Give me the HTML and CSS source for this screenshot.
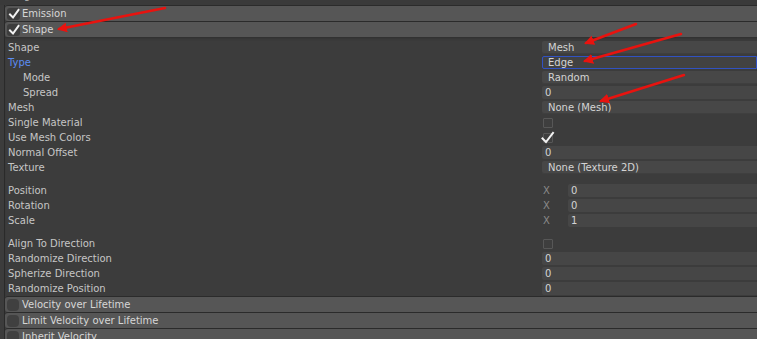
FILE: index.html
```html
<!DOCTYPE html>
<html>
<head>
<meta charset="utf-8">
<link rel="stylesheet" href="styles.css">
</head>
<body>
<div class="inspector">
  <div class="topstrip"><span class="cut">Ring Buffer Mode</span></div>
  <div class="panel">
    <div class="module-header"><span class="toggle"><svg viewBox="0 0 12 12" class="tick"><path d="M2 6.5 L5 9.5 L10.5 2" /></svg></span><span class="mtitle">Emission</span></div>
    <div class="module-header"><span class="toggle"><svg viewBox="0 0 12 12" class="tick"><path d="M2 6.5 L5 9.5 L10.5 2" /></svg></span><span class="mtitle">Shape</span></div>
    <div class="module-body">
      <div class="row"><span class="label">Shape</span><div class="field popup">Mesh</div></div>
      <div class="row"><span class="label focus">Type</span><div class="field popup focused">Edge</div></div>
      <div class="row"><span class="label indent">Mode</span><div class="field popup">Random</div></div>
      <div class="row"><span class="label indent">Spread</span><div class="field num">0</div></div>
      <div class="row"><span class="label">Mesh</span><div class="field popup">None (Mesh)</div></div>
      <div class="row"><span class="label">Single Material</span><div class="cbwrap"><span class="checkbox"></span></div></div>
      <div class="row"><span class="label">Use Mesh Colors</span><div class="cbwrap"><span class="checkbox"><svg viewBox="0 0 14 14" class="cbtick"><path d="M1.5 7.5 L5 11 L12 2" /></svg></span></div></div>
      <div class="row"><span class="label">Normal Offset</span><div class="field num">0</div></div>
      <div class="row"><span class="label">Texture</span><div class="field popup">None (Texture 2D)</div></div>
      <div class="spacer"></div>
      <div class="row"><span class="label">Position</span><div class="vec"><span class="axis">X</span><div class="field num">0</div></div></div>
      <div class="row"><span class="label">Rotation</span><div class="vec"><span class="axis">X</span><div class="field num">0</div></div></div>
      <div class="row"><span class="label">Scale</span><div class="vec"><span class="axis">X</span><div class="field num">1</div></div></div>
      <div class="spacer"></div>
      <div class="row"><span class="label">Align To Direction</span><div class="cbwrap"><span class="checkbox"></span></div></div>
      <div class="row"><span class="label">Randomize Direction</span><div class="field num">0</div></div>
      <div class="row"><span class="label">Spherize Direction</span><div class="field num">0</div></div>
      <div class="row"><span class="label">Randomize Position</span><div class="field num">0</div></div>
    </div>
    <div class="module-header"><span class="toggle off"></span><span class="mtitle">Velocity over Lifetime</span></div>
    <div class="module-header"><span class="toggle off"></span><span class="mtitle">Limit Velocity over Lifetime</span></div>
    <div class="module-header"><span class="toggle off"></span><span class="mtitle">Inherit Velocity</span></div>
  </div>
  <svg class="arrows" width="757" height="339" viewBox="0 0 757 339">
    <defs>
      <marker id="ah" viewBox="0 0 10 10" refX="8" refY="5" markerWidth="4" markerHeight="4" orient="auto-start-reverse">
        <path d="M0 0 L10 5 L0 10 Z" fill="#e8130f"/>
      </marker>
    </defs>
    <line x1="165" y1="8" x2="59" y2="29" marker-end="url(#ah)"/>
    <line x1="636" y1="24" x2="586" y2="43" marker-end="url(#ah)"/>
    <line x1="681" y1="34" x2="585" y2="61" marker-end="url(#ah)"/>
    <line x1="684" y1="75" x2="601" y2="101" marker-end="url(#ah)"/>
  </svg>
</div>
</body>
</html>
```
FILE: styles.css
```css
html, body {
  margin: 0;
  padding: 0;
  background: #3c3c3c;
}
body {
  font-family: "DejaVu Sans", Verdana, sans-serif;
  font-size: 10px;
  color: #c6c6c6;
}
.inspector {
  position: relative;
  width: 757px;
  height: 339px;
  overflow: hidden;
  background: #3c3c3c;
}
.topstrip {
  height: 5px;
  background: #3a3a3a;
  overflow: hidden;
  position: relative;
}
.cut {
  display: block;
  margin-top: -10px;
  padding-left: 8px;
  line-height: 12px;
  color: #b0b0b0;
  white-space: nowrap;
}
.panel {
  margin-left: 4px;
  border-left: 1px solid #2a2a2a;
  display: flex;
  flex-direction: column;
}
.module-header {
  height: 15px;
  border-top: 1px solid #2b2b2b;
  background: #565656;
  border-radius: 3px 0 0 3px;
  display: flex;
  align-items: center;
  color: #d6d6d6;
}
.module-header + .module-body {
  box-shadow: inset 0 3px 3px -2px #2e2e2e;
}
.toggle {
  width: 13px;
  height: 12px;
  margin-left: 2px;
  margin-right: 2px;
  background: #3d3d3d;
  border-radius: 3px;
  display: flex;
  align-items: center;
  justify-content: center;
}
.toggle.off {
  width: 12px;
  height: 12px;
  background: #404040;
  border-radius: 4px;
  margin-right: 3px;
}
.tick {
  width: 12px;
  height: 12px;
}
.tick path, .cbtick path {
  fill: none;
  stroke: #f2f2f2;
  stroke-width: 2;
  stroke-linecap: square;
  stroke-linejoin: miter;
}
.mtitle {
  line-height: 15px;
  white-space: nowrap;
}
.module-body {
  padding: 3px 0 0 0;
  height: 256px;
  display: flex;
  flex-direction: column;
}
.row {
  height: 15px;
  display: grid;
  grid-template-columns: 537px 1fr;
  align-items: center;
}
.label {
  padding-left: 3px;
  white-space: nowrap;
  line-height: 15px;
}
.label.indent {
  padding-left: 18px;
}
.label.focus {
  color: #5b8cf2;
}
.field {
  height: 13px;
  background: #464646;
  border-radius: 2px 0 0 2px;
  box-sizing: border-box;
  line-height: 13px;
  color: #d4d4d4;
  white-space: nowrap;
}
.field.popup {
  padding-left: 6px;
  background: #474747;
  box-shadow: inset 0 -1px 0 #3f3f3f;
}
.field.num {
  padding-left: 3px;
}
.field.focused {
  border: 1px solid #3152c2;
  line-height: 11px;
  padding-left: 5px;
  background: #424242;
  box-shadow: none;
}
.cbwrap {
  display: flex;
  align-items: center;
  padding-left: 1px;
}
.checkbox {
  width: 10px;
  height: 10px;
  box-sizing: border-box;
  border: 1px solid #575757;
  background: #3e3e3e;
  border-radius: 1px;
  position: relative;
}
.cbtick {
  position: absolute;
  left: -3px;
  top: -3px;
  width: 14px;
  height: 14px;
}
.vec {
  display: flex;
  align-items: center;
}
.axis {
  width: 25px;
  padding-left: 1px;
  color: #8a8a8a;
  line-height: 13px;
}
.vec .field {
  flex: 1;
}
.spacer {
  height: 8px;
}
.arrows {
  position: absolute;
  left: 0;
  top: 0;
  pointer-events: none;
}
.arrows line {
  stroke: #e8130f;
  stroke-width: 2.5;
  stroke-linecap: round;
}
```
